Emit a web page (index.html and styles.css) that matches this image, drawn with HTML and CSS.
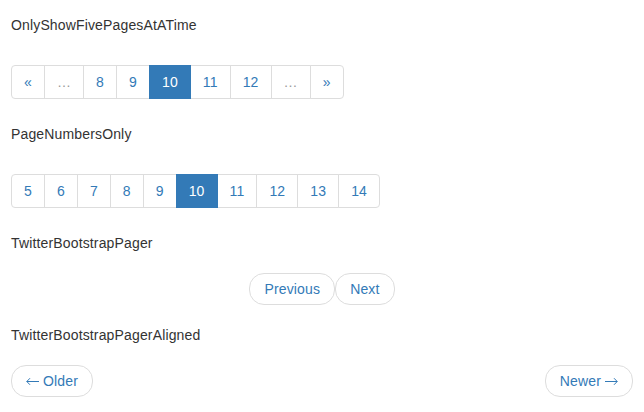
FILE: index.html
```html
<!DOCTYPE html>
<html>
<head>
<meta charset="utf-8">
<link rel="stylesheet" href="styles.css">
</head>
<body>
<div class="page">
  <p class="label">OnlyShowFivePagesAtATime</p>
  <ul class="pagination">
    <li><a href="#">«</a></li>
    <li class="disabled"><a>…</a></li>
    <li><a href="#">8</a></li>
    <li><a href="#">9</a></li>
    <li class="active"><a>10</a></li>
    <li><a href="#">11</a></li>
    <li><a href="#">12</a></li>
    <li class="disabled"><a>…</a></li>
    <li><a href="#">»</a></li>
  </ul>

  <p class="label">PageNumbersOnly</p>
  <ul class="pagination">
    <li><a href="#">5</a></li>
    <li><a href="#">6</a></li>
    <li><a href="#">7</a></li>
    <li><a href="#">8</a></li>
    <li><a href="#">9</a></li>
    <li class="active"><a>10</a></li>
    <li><a href="#">11</a></li>
    <li><a href="#">12</a></li>
    <li><a href="#">13</a></li>
    <li><a href="#">14</a></li>
  </ul>

  <p class="label">TwitterBootstrapPager</p>
  <ul class="pager">
    <li><a href="#">Previous</a></li>
    <li><a href="#">Next</a></li>
  </ul>

  <p class="label">TwitterBootstrapPagerAligned</p>
  <ul class="pager pager-aligned">
    <li><a href="#"><svg class="arrow" width="13" height="9" viewBox="0 0 13 9"><path d="M0.8 4.5H13M4 1.2L0.8 4.5L4 7.8" fill="none" stroke="currentColor" stroke-width="1"/></svg> Older</a></li>
    <li><a href="#">Newer <svg class="arrow" width="13" height="9" viewBox="0 0 13 9"><path d="M0 4.5H12.2M9 1.2L12.2 4.5L9 7.8" fill="none" stroke="currentColor" stroke-width="1"/></svg></a></li>
  </ul>
</div>
</body>
</html>
```
FILE: styles.css
```css
html, body {
  margin: 0;
  padding: 0;
  background: #fff;
}
body {
  font-family: "Liberation Sans", Arial, sans-serif;
  font-size: 14px;
  line-height: 20px;
  color: #333;
  letter-spacing: 0.15px;
}
.page {
  display: flex;
  flex-direction: column;
  padding: 15px 11px;
}
.label {
  margin: 0;
}
.pagination {
  display: flex;
  align-self: flex-start;
  list-style: none;
  padding: 0;
  margin: 30px 0 25px;
  border-radius: 4px;
}
.pagination li a {
  display: block;
  position: relative;
  padding: 6px 12px;
  margin-left: -1px;
  line-height: 20px;
  color: #337ab7;
  text-decoration: none;
  background: #fff;
  border: 1px solid #ddd;
}
.pagination li:first-child a {
  margin-left: 0;
  border-radius: 4px 0 0 4px;
}
.pagination li:last-child a {
  border-radius: 0 4px 4px 0;
}
.pagination li.active a {
  z-index: 2;
  color: #fff;
  background: #337ab7;
  border-color: #337ab7;
}
.pagination li.disabled a {
  color: #999;
}
.pager {
  display: flex;
  justify-content: center;
  list-style: none;
  padding: 0;
  margin: 20px 0;
}
.pager li a {
  display: block;
  padding: 5px 14px;
  line-height: 20px;
  color: #337ab7;
  text-decoration: none;
  background: #fff;
  border: 1px solid #ddd;
  border-radius: 15px;
}
.pager .arrow {
  vertical-align: 0px;
}
.pager-aligned {
  justify-content: space-between;
  margin-bottom: 0;
}
```
